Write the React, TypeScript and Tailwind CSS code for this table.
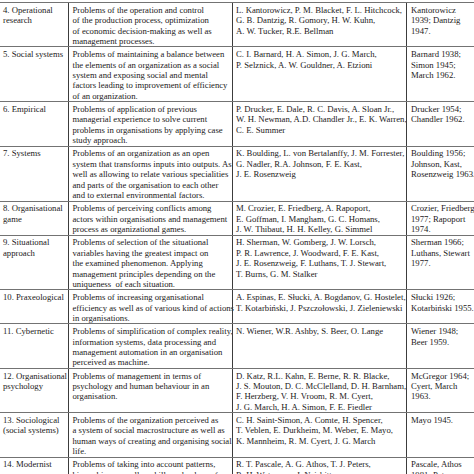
type Row = {
  name: string[]
  problems: string[]
  authors: string[]
  years: string[]
}

const rows: Row[] = [
  {
    name: ["4. Operational", "research"],
    problems: [
      "Problems of the operation and control",
      "of the production process, optimization",
      "of economic decision-making as well as",
      "management processes.",
    ],
    authors: [
      "L. Kantorowicz, P. M. Blacket, F. L. Hitchcock,",
      "G. B. Dantzig, R. Gomory, H. W. Kuhn,",
      "A. W. Tucker, R.E. Bellman",
    ],
    years: ["Kantorowicz", "1939; Dantzig", "1947."],
  },
  {
    name: ["5. Social systems"],
    problems: [
      "Problems of maintaining a balance between",
      "the elements of an organization as a social",
      "system and exposing social and mental",
      "factors leading to improvement of efficiency",
      "of an organization.",
    ],
    authors: ["C. I. Barnard, H. A. Simon, J. G. March,", "P. Selznick, A. W. Gouldner, A. Etzioni"],
    years: ["Barnard 1938;", "Simon 1945;", "March 1962."],
  },
  {
    name: ["6. Empirical"],
    problems: [
      "Problems of application of previous",
      "managerial experience to solve current",
      "problems in organisations by applying case",
      "study approach.",
    ],
    authors: [
      "P. Drucker, E. Dale, R. C. Davis, A. Sloan Jr.,",
      "W. H. Newman, A.D. Chandler Jr., E. K. Warren,",
      "C. E. Summer",
    ],
    years: ["Drucker 1954;", "Chandler 1962."],
  },
  {
    name: ["7. Systems"],
    problems: [
      "Problems of an organization as an open",
      "system that transforms inputs into outputs. As",
      "well as allowing to relate various specialities",
      "and parts of the organisation to each other",
      "and to external environmental factors.",
    ],
    authors: [
      "K. Boulding, L. von Bertalanffy, J. M. Forrester,",
      "G. Nadler, R.A. Johnson, F. E. Kast,",
      "J. E. Rosenzweig",
    ],
    years: ["Boulding 1956;", "Johnson, Kast,", "Rosenzweig 1963."],
  },
  {
    name: ["8. Organisational", "game"],
    problems: [
      "Problems of perceiving conflicts among",
      "actors within organisations and management",
      "process as organizational games.",
    ],
    authors: [
      "M. Crozier, E. Friedberg, A. Rapoport,",
      "E. Goffman, I. Mangham, G. C. Homans,",
      "J. W. Thibaut, H. H. Kelley, G. Simmel",
    ],
    years: ["Crozier, Friedberg", "1977; Rapoport", "1974."],
  },
  {
    name: ["9. Situational", "approach"],
    problems: [
      "Problems of selection of the situational",
      "variables having the greatest impact on",
      "the examined phenomenon. Applying",
      "management principles depending on the",
      "uniqueness  of each situation.",
    ],
    authors: [
      "H. Sherman, W. Gomberg, J. W. Lorsch,",
      "P. R. Lawrence, J. Woodward, F. E. Kast,",
      "J. E. Rosenzweig, F. Luthans, T. J. Stewart,",
      "T. Burns, G. M. Stalker",
    ],
    years: ["Sherman 1966;", "Luthans, Stewart", "1977."],
  },
  {
    name: ["10. Praxeological"],
    problems: [
      "Problems of increasing organisational",
      "efficiency as well as of various kind of actions",
      "in organisations.",
    ],
    authors: [
      "A. Espinas, E. Słucki, A. Bogdanov, G. Hostelet,",
      "T. Kotarbiński, J. Pszczołowski, J. Zieleniewski",
    ],
    years: ["Słucki 1926;", "Kotarbiński 1955."],
  },
  {
    name: ["11. Cybernetic"],
    problems: [
      "Problems of simplification of complex reality,",
      "information systems, data processing and",
      "management automation in an organisation",
      "perceived as machine.",
    ],
    authors: ["N. Wiener, W.R. Ashby, S. Beer, O. Lange"],
    years: ["Wiener 1948;", "Beer 1959."],
  },
  {
    name: ["12. Organisational", "psychology"],
    problems: [
      "Problems of management in terms of",
      "psychology and human behaviour in an",
      "organisation.",
    ],
    authors: [
      "D. Katz, R.L. Kahn, E. Berne, R. R. Blacke,",
      "J. S. Mouton, D. C. McClelland, D. H. Barnham,",
      "F. Herzberg, V. H. Vroom, R. M. Cyert,",
      "J. G. March, H. A. Simon, F. E. Fiedler",
    ],
    years: ["McGregor 1964;", "Cyert, March", "1963."],
  },
  {
    name: ["13. Sociological", "(social systems)"],
    problems: [
      "Problems of the organization perceived as",
      "a system of social macrostructure as well as",
      "human ways of creating and organising social",
      "life.",
    ],
    authors: [
      "C. H. Saint-Simon, A. Comte, H. Spencer,",
      "T. Veblen, E. Durkheim, M. Weber, E. Mayo,",
      "K. Mannheim, R. M. Cyert, J. G. March",
    ],
    years: ["Mayo 1945."],
  },
  {
    name: ["14. Modernist"],
    problems: [
      "Problems of taking into account patterns,",
      "hierarchies, as well as skills and values of",
      "the organisation.",
    ],
    authors: ["R. T. Pascale, A. G. Athos, T. J. Peters,", "R. H. Waterman, J. Naisbitt", ""],
    years: ["Pascale, Athos", "1981; Peters", "1982."],
  },
]

function Lines({ items }: { items: string[] }) {
  return (
    <>
      {items.map((t, i) => (
        <div key={i} className="whitespace-pre">
          {t}
        </div>
      ))}
    </>
  )
}

export default function App() {
  return (
    <div className="w-[474px] h-[474px] overflow-hidden bg-white">
      <div
        className="w-[500px] pt-[2px] text-[8.7px] leading-[10.4px] text-[#1c1a1a]"
        style={{ fontFamily: '"Liberation Serif", "Times New Roman", serif' }}
      >
        {rows.map((r, i) => (
          <div
            key={i}
            className="grid grid-cols-[68px_164px_174px_94px] border-t border-[#737373]"
          >
            <div className="pl-[3px] pt-[1.8px]">
              <Lines items={r.name} />
            </div>
            <div className="border-l border-[#3c3c3c] pl-[3.5px] pt-[1.8px]">
              <Lines items={r.problems} />
            </div>
            <div className="border-l border-[#3c3c3c] pl-[3px] pt-[1.8px]">
              <Lines items={r.authors} />
            </div>
            <div className="border-l border-[#3c3c3c] pl-[4px] pt-[1.8px]">
              <Lines items={r.years} />
            </div>
          </div>
        ))}
      </div>
    </div>
  )
}
